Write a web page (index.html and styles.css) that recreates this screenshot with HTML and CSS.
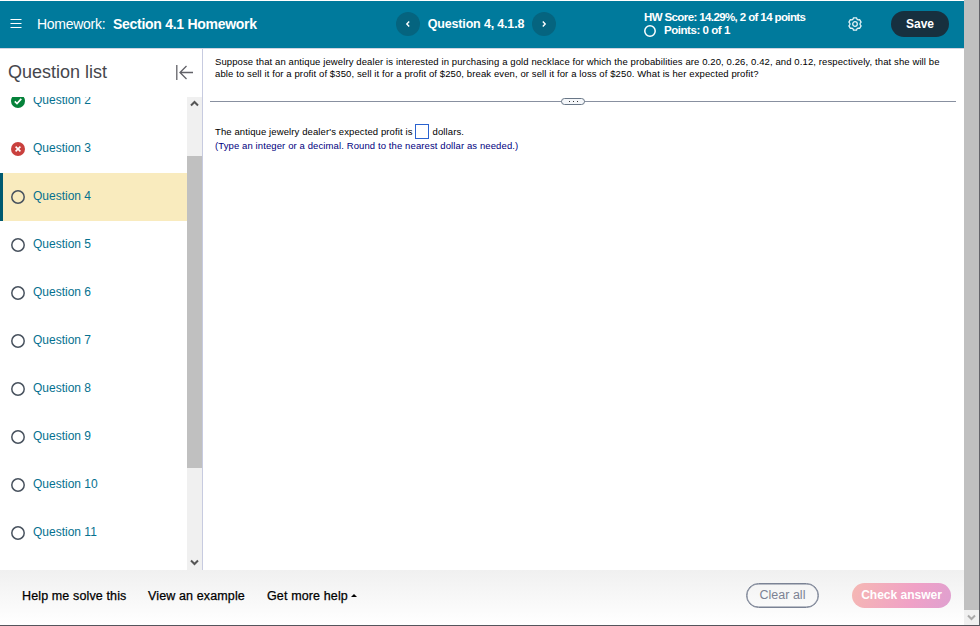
FILE: index.html
```html
<!DOCTYPE html>
<html lang="en">
<head>
<meta charset="utf-8">
<title>Section 4.1 Homework</title>
<link rel="stylesheet" href="styles.css">
</head>
<body>
<div class="window">
  <div class="app">
    <header class="topbar">
      <svg class="menu" width="12" height="11" viewBox="0 0 12 11"><path d="M.5 1.500h11M.5 5.500h11M.5 9.500h11" stroke="#fff" stroke-width="1"/></svg>
      <span class="course">Homework:</span>
      <span class="title">Section 4.1 Homework</span>
      <nav class="pager">
        <button class="round"><svg width="6" height="8" viewBox="0 0 6 8"><path d="M4.200 1.500L1.800 4l2.400 2.500" fill="none" stroke="#fff" stroke-width="1.400"/></svg></button>
        <span class="current">Question 4, 4.1.8</span>
        <button class="round"><svg width="6" height="8" viewBox="0 0 6 8"><path d="M1.800 1.500L4.200 4 1.800 6.500" fill="none" stroke="#fff" stroke-width="1.400"/></svg></button>
      </nav>
      <div class="score">
        <div class="score-line">HW Score: 14.29%, 2 of 14 points</div>
        <div class="points-line"><svg class="ring" width="12" height="12" viewBox="0 0 12 12"><circle cx="6" cy="6" r="5.200" fill="none" stroke="#fff" stroke-width="1.500"/></svg><span>Points: 0 of 1</span></div>
      </div>
      <svg class="gear" width="14" height="14" viewBox="0 0 14 14" fill="none" stroke="#e4f2f6" stroke-width="1.300" stroke-linejoin="round"><path d="M5.500.8h3l.5 1.500 1.100.6 1.500-.3 1.500 2.500-1 1.200v1.400l1 1.200-1.500 2.500-1.500-.3-1.100.6-.5 1.500h-3L5 11.700l-1.100-.6-1.500.3L.9 8.900l1-1.200V6.300l-1-1.200 1.500-2.500 1.500.3L5 2.300z"/><circle cx="7" cy="7" r="2.300"/></svg>
      <button class="save">Save</button>
    </header>
    <main class="body">
      <aside class="side">
        <div class="side-head">
          <h2>Question list</h2>
          <svg class="collapse" width="17" height="15" viewBox="0 0 17 15"><path d="M.8 0v15M4 7.500h13M10.500 1L4 7.500l6.500 6.500" fill="none" stroke="#626268" stroke-width="1.300"/></svg>
        </div>
        <div class="list-wrap">
          <ul class="list">
            <li><svg class="mark" width="14" height="14" viewBox="0 0 14 14"><circle cx="7" cy="7" r="7" fill="#05823a"/><path d="M3.800 7.300l2.200 2.200 4.300-4.600" fill="none" stroke="#fff" stroke-width="1.700"/></svg><span>Question 2</span></li>
            <li><svg class="mark" width="14" height="14" viewBox="0 0 14 14"><circle cx="7" cy="7" r="7" fill="#c9403d"/><path d="M4.600 4.600l4.800 4.800M9.400 4.600L4.600 9.400" stroke="#fff" stroke-width="1.600"/></svg><span>Question 3</span></li>
            <li class="active"><svg class="mark open" width="14" height="14" viewBox="0 0 14 14"><circle cx="7" cy="7" r="6.200"/></svg><span>Question 4</span></li>
            <li><svg class="mark open" width="14" height="14" viewBox="0 0 14 14"><circle cx="7" cy="7" r="6.200"/></svg><span>Question 5</span></li>
            <li><svg class="mark open" width="14" height="14" viewBox="0 0 14 14"><circle cx="7" cy="7" r="6.200"/></svg><span>Question 6</span></li>
            <li><svg class="mark open" width="14" height="14" viewBox="0 0 14 14"><circle cx="7" cy="7" r="6.200"/></svg><span>Question 7</span></li>
            <li><svg class="mark open" width="14" height="14" viewBox="0 0 14 14"><circle cx="7" cy="7" r="6.200"/></svg><span>Question 8</span></li>
            <li><svg class="mark open" width="14" height="14" viewBox="0 0 14 14"><circle cx="7" cy="7" r="6.200"/></svg><span>Question 9</span></li>
            <li><svg class="mark open" width="14" height="14" viewBox="0 0 14 14"><circle cx="7" cy="7" r="6.200"/></svg><span>Question 10</span></li>
            <li><svg class="mark open" width="14" height="14" viewBox="0 0 14 14"><circle cx="7" cy="7" r="6.200"/></svg><span>Question 11</span></li>
          </ul>
          <div class="scroll">
            <svg width="9" height="7" viewBox="0 0 9 7"><path d="M1 5.500L4.500 2 8 5.500" fill="none" stroke="#555" stroke-width="2"/></svg>
            <div class="thumb"></div>
            <svg width="9" height="7" viewBox="0 0 9 7"><path d="M1 1.500L4.500 5 8 1.500" fill="none" stroke="#555" stroke-width="2"/></svg>
          </div>
        </div>
      </aside>
      <section class="content">
        <p class="problem"><span>Suppose that an antique jewelry dealer is interested in purchasing a gold necklace for which the probabilities are 0.20, 0.26, 0.42, and 0.12, respectively, that she will be</span><br><span>able to sell it for a profit of $350, sell it for a profit of $250, break even, or sell it for a loss of $250. What is her expected profit?</span></p>
        <div class="divider"><div class="grip"><i></i><i></i><i></i></div></div>
        <div class="answer"><span>The antique jewelry dealer's expected profit is</span><span class="box"></span><span>dollars.</span></div>
        <p class="hint">(Type an integer or a decimal. Round to the nearest dollar as needed.)</p>
      </section>
    </main>
    <footer class="foot">
      <span class="solve">Help me solve this</span>
      <span class="example">View an example</span>
      <span class="more">Get more help</span>
      <svg class="caret" width="6" height="3" viewBox="0 0 6 3"><path d="M0 3l3-3 3 3z" fill="#000"/></svg>
      <button class="clear">Clear all</button>
      <button class="check">Check answer</button>
    </footer>
  </div>
  <div class="outer-scroll"><div class="outer-end"><svg width="9" height="7" viewBox="0 0 9 7"><path d="M1 1.500L4.500 5 8 1.500" fill="none" stroke="#aaa" stroke-width="2"/></svg></div></div>
</div>
</body>
</html>
```
FILE: styles.css
```css
* { box-sizing: border-box; }
body { margin: 0; font-family: "Liberation Sans", Arial, sans-serif; background: #fff; overflow: hidden; }
h2, p, ul { margin: 0; padding: 0; font-weight: 400; }
button { font-family: inherit; border: 0; padding: 0; }
svg, i { display: block; flex: none; }
span { white-space: nowrap; }
.window { width: 980px; height: 626px; display: flex; border-right: 1px solid #626268; border-bottom: 1px solid #55555c; }
.app { width: 964px; display: flex; flex-direction: column; padding-top: 1px; }
.topbar { height: 48px; flex: none; display: flex; align-items: center; background: #007a9c; color: #fff; border-bottom: 1px solid #d0d3e0; padding-bottom: 2px; }
.menu { margin-left: 10px; }
.course { width: 76px; margin-left: 15px; font-size: 14px; letter-spacing: -.28px; }
.title { width: 144px; font-size: 14px; font-weight: 700; letter-spacing: -.28px; }
.pager { display: flex; align-items: center; margin-left: 139px; width: 160px; justify-content: space-between; padding-top: 1px; }
.round { width: 24px; height: 24px; border-radius: 50%; background: #05647f; display: flex; align-items: center; justify-content: center; }
.current { font-size: 12.500px; font-weight: 700; letter-spacing: -.17px; }
.score { margin-left: 88px; width: 204px; font-size: 11.500px; line-height: 13px; font-weight: 700; letter-spacing: -.61px; }
.points-line { display: flex; align-items: center; letter-spacing: -.45px; }
.ring { margin: 1px 8px 0 0; }
.save { margin-left: 29px; width: 58px; height: 26px; border-radius: 13px; background: #17303f; color: #fff; font-size: 12px; font-weight: 700; margin-top: 1px; }
.body { height: 521px; flex: none; display: flex; }
.side { width: 203px; flex: none; border-right: 1px solid #c7cbe0; display: flex; flex-direction: column; }
.side-head { height: 48px; display: flex; align-items: center; padding: 0 9px 1px 8px; justify-content: space-between; }
.side-head h2 { font-size: 18px; color: #46464c; margin-bottom: 1px; }
.list-wrap { height: 473px; display: flex; }
.list { width: 187px; overflow: hidden; list-style: none; font-size: 12px; color: #05718f; }
.list li { height: 48px; display: flex; align-items: center; padding-left: 11px; }
.list li:first-child { margin-top: -20px; }
.list li span { margin: 0 0 2px 8px; }
.list .active { background: #f9ebbe; border-left: 3px solid #005a70; padding-left: 8px; }
.open { fill: none; stroke: #48525e; stroke-width: 1.500px; }
.mark { margin-bottom: 1px; }
.scroll { width: 15px; background: #f0f0f0; display: flex; flex-direction: column; align-items: center; justify-content: space-between; padding: 3px 0 4px; }
.thumb { width: 15px; height: 312px; background: #c0c0c0; margin-bottom: 43px; }
.content { flex: 1; padding: 7px 8px 0 7px; font-size: 9.500px; letter-spacing: .108px; color: #000; }
.problem { padding-left: 5px; line-height: 12px; height: 45px; }
.divider { height: 1px; width: 746px; background: #8890a0; display: flex; justify-content: center; align-items: center; padding-right: 20px; }
.grip { width: 24px; height: 7px; border: 1px solid #697787; border-radius: 4px; background: #f5f7fa; display: flex; align-items: center; justify-content: center; gap: 3px; }
.grip i { width: 1px; height: 1px; background: #333; }
.answer { display: flex; align-items: center; height: 16px; margin: 21px 0 0 5px; }
.box { width: 14px; height: 15px; border: 1px solid #2a62cf; margin: 0 4px 0 2px; }
.hint { padding-left: 5px; color: #000080; line-height: 12px; margin-top: 1px; }
.foot { height: 55px; display: flex; align-items: center; background: linear-gradient(#f0f0f0, #fff); padding: 0 13px 4px 22px; }
.foot span { font-size: 12.500px; letter-spacing: .13px; -webkit-text-stroke: .25px #000; }
.solve { width: 126px; }
.example { width: 119px; }
.more { width: 84px; }
.clear { margin-left: auto; width: 73px; height: 25px; border: 1px solid #7a8294; border-radius: 13px; background: transparent; color: #7c8293; font-size: 12.500px; padding-bottom: 2px; box-shadow: inset 0 0 0 .5px #7a8294; }
.check { margin-left: 33px; width: 99px; height: 25px; border-radius: 13px; background: linear-gradient(110deg, #f5b8b3, #f0a1c6 60%, #dfa0d0); color: #fff; font-size: 12px; font-weight: 700; padding-bottom: 2px; }
.outer-scroll { width: 15px; background: #c0c0c0; display: flex; align-items: flex-end; }
.outer-end { width: 15px; height: 15px; background: #f0f0f0; display: flex; align-items: center; justify-content: center; }
```
